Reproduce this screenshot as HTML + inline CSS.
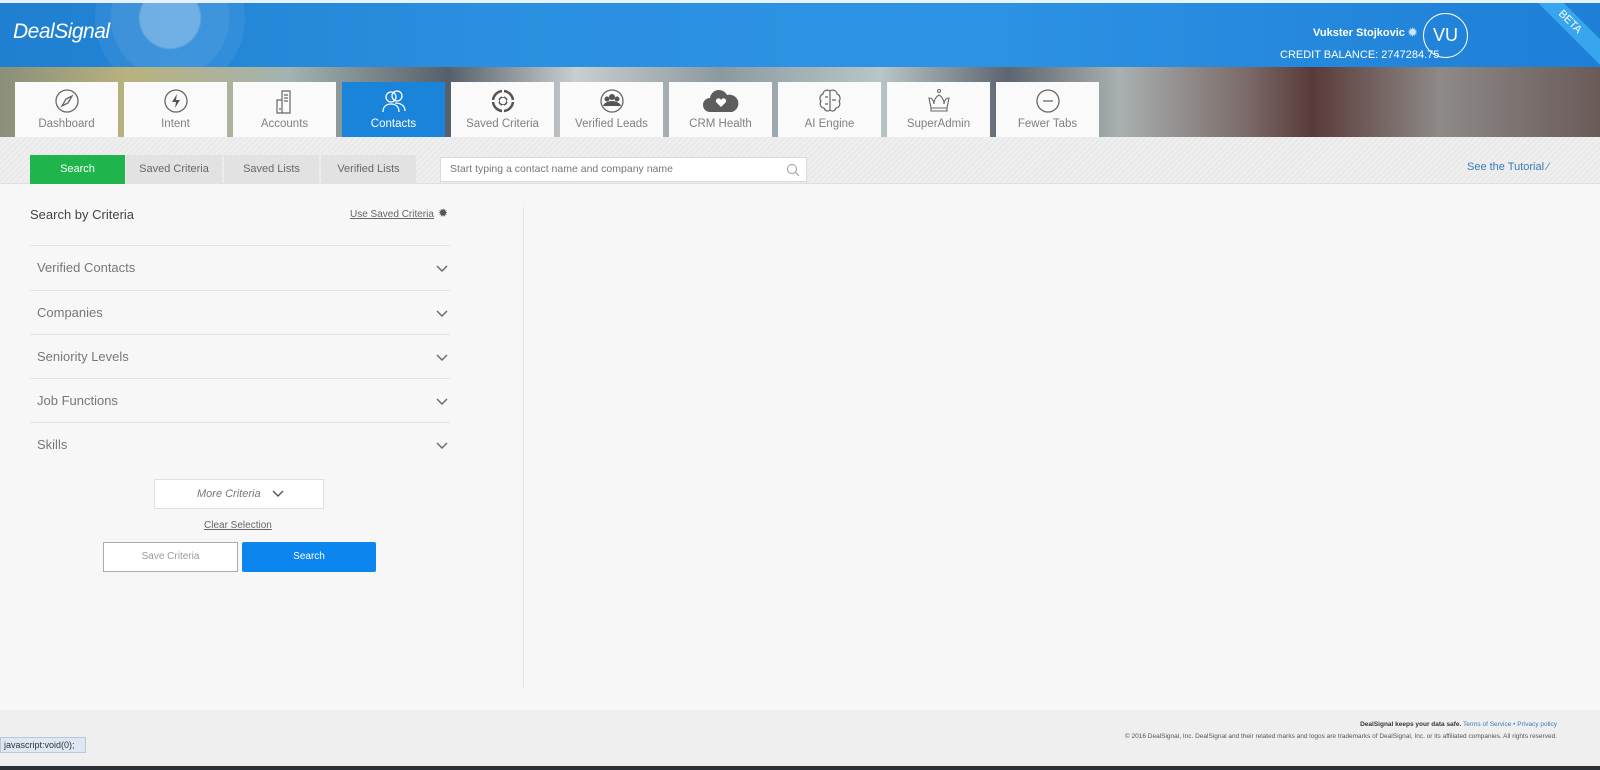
<!DOCTYPE html>
<html><head><meta charset="utf-8"><style>
*{box-sizing:border-box;margin:0;padding:0}
body{width:1600px;height:770px;overflow:hidden;background:#f7f7f7;font-family:"Liberation Sans",sans-serif;position:relative}
.abs{position:absolute}
#hdr{left:0;top:3px;width:1600px;height:64px;background:linear-gradient(90deg,#1f7fd0 0%,#2a8fe0 30%,#2d93e4 60%,#1d7fd6 100%);overflow:hidden}
#photo{left:0;top:67px;width:1600px;height:70px;background:linear-gradient(90deg,#8a8f7a 0%,#b8b27e 8%,#a4b3b0 18%,#56606a 28%,#c9ced0 36%,#8c99a0 45%,#b9c6c8 55%,#5d6570 63%,#a8b0b0 70%,#7a6a68 78%,#5a3a38 82%,#8d8a88 90%,#6a5a58 100%)}
.tab{position:absolute;top:82px;width:103px;height:55px;background:#fafafa;text-align:center;color:#808080;font-size:11.5px}
.tab .ic{display:block;margin:6px auto 0;height:26px}
.tab span{display:block;margin-top:4px}
.tab.on{background:#1a83da;color:#fff}
#sub{left:0;top:137px;width:1600px;height:47px;background:repeating-linear-gradient(135deg,#efefef 0 2px,#e9e9e9 2px 4px);border-bottom:1px solid #e0e0e0}
.st{position:absolute;top:155px;height:29px;background:#e2e2e2;color:#666;font-size:11px;text-align:center;line-height:29px}
#srch{left:440px;top:157px;width:367px;height:25px;background:#fff;border:1px solid #cfdbe6;font-size:10.5px;color:#777;line-height:23px;padding-left:9px}
.row{position:absolute;left:30px;width:420px;height:44px;border-top:1px solid #e2e2e2;color:#777;font-size:13px;line-height:44px;padding-left:7px}
.chev{position:absolute;right:2px;top:19px}
</style></head><body>
<div class="abs" style="left:0;top:0;width:1600px;height:3px;background:#e8f2fb"></div>
<div id="hdr" class="abs">
 <div class="abs" style="left:95px;top:-60px;width:150px;height:150px;border-radius:50%;background:radial-gradient(circle,rgba(255,255,255,.35) 0 28%,rgba(255,255,255,.12) 30% 55%,rgba(255,255,255,.06) 57% 100%)"></div>
 <div class="abs" style="left:13px;top:17px;color:#fff;font-size:21px;font-style:italic;letter-spacing:-0.5px">DealSignal</div>
 <div class="abs" style="left:1313px;top:23px;color:#fff;font-size:11px;font-weight:bold">Vukster Stojkovic <span style="color:#cfe4f7">✹</span></div>
 <div class="abs" style="left:1280px;top:46px;color:#fff;font-size:11px">CREDIT BALANCE: 2747284.75</div>
 <div class="abs" style="left:1423px;top:10px;width:45px;height:45px;border:1.5px solid #fff;border-radius:50%;color:#fff;font-size:18px;text-align:center;line-height:42px">VU</div>
 <div class="abs" style="left:1515px;top:10px;width:110px;height:18px;background:#38a6ee;transform:rotate(45deg);color:#fff;font-size:11px;text-align:center;line-height:18px">BETA</div>
</div>
<div id="photo" class="abs"></div>

<div class="tab" style="left:15px"><svg class="ic" width="26" height="26" viewBox="0 0 26 26"><circle cx="13" cy="13" r="11" fill="none" stroke="#666" stroke-width="1.3"/><path d="M18 8 L14 15 L8 18 L12 11Z" fill="none" stroke="#666" stroke-width="1.3"/></svg><span>Dashboard</span></div>
<div class="tab" style="left:124px"><svg class="ic" width="26" height="26" viewBox="0 0 26 26"><circle cx="13" cy="13" r="11" fill="none" stroke="#666" stroke-width="1.3"/><path d="M14 6 L9 14 H13 L12 20 L17 12 H13Z" fill="#555"/></svg><span>Intent</span></div>
<div class="tab" style="left:233px"><svg class="ic" width="26" height="26" viewBox="0 0 26 26"><path d="M10 3h8v22h-8zM5 12h5v13H5zM12 7h4M12 10h4M12 13h4M7 21h2" fill="none" stroke="#666" stroke-width="1.2"/></svg><span>Accounts</span></div>
<div class="tab on" style="left:342px"><svg class="ic" width="26" height="26" viewBox="0 0 26 26"><circle cx="10" cy="9" r="5" fill="none" stroke="#fff" stroke-width="1.3"/><circle cx="16" cy="8" r="5" fill="none" stroke="#fff" stroke-width="1.3"/><path d="M2 24c0-6 4-8 8-8s8 2 8 8M14 15c5 0 10 2 10 8" fill="none" stroke="#fff" stroke-width="1.3"/></svg><span>Contacts</span></div>
<div class="tab" style="left:451px"><svg class="ic" width="26" height="26" viewBox="0 0 26 26"><circle cx="13" cy="13" r="10" fill="none" stroke="#555" stroke-width="2.5"/><circle cx="13" cy="13" r="4" fill="none" stroke="#555" stroke-width="1.5"/><path d="M13 1v8M13 17v8M1 13h8M17 13h8" stroke="#fafafa" stroke-width="2"/></svg><span>Saved Criteria</span></div>
<div class="tab" style="left:560px"><svg class="ic" width="26" height="26" viewBox="0 0 26 26"><circle cx="13" cy="13" r="11" fill="none" stroke="#666" stroke-width="1.3"/><circle cx="8" cy="11" r="2.5" fill="#555"/><circle cx="13" cy="9" r="3" fill="#555"/><circle cx="18" cy="11" r="2.5" fill="#555"/><path d="M4 18c1-4 7-5 9-5s8 1 9 5z" fill="#555"/></svg><span>Verified Leads</span></div>
<div class="tab" style="left:669px"><svg class="ic" width="38" height="26" viewBox="0 0 38 26"><path d="M8 24a7 7 0 0 1 0-14 9 9 0 0 1 17-3 8 8 0 0 1 5 17z" fill="#5d5d5d"/><path d="M19 19l-5-5a2.5 2.5 0 0 1 5-2 2.5 2.5 0 0 1 5 2z" fill="#fff"/></svg><span>CRM Health</span></div>
<div class="tab" style="left:778px"><svg class="ic" width="26" height="26" viewBox="0 0 26 26"><path d="M13 3c-3-2-7 0-7 3-3 1-4 5-2 7-2 3 0 7 3 7 1 3 4 4 6 2 2 2 5 1 6-2 3 0 5-4 3-7 2-2 1-6-2-7 0-3-4-5-7-3zM13 3v19M8 9h3M15 12h4M8 16h3" fill="none" stroke="#666" stroke-width="1.2"/></svg><span>AI Engine</span></div>
<div class="tab" style="left:887px"><svg class="ic" width="26" height="26" viewBox="0 0 26 26"><circle cx="13" cy="3" r="1.5" fill="none" stroke="#666"/><path d="M3 10c3 0 5 3 5 6 0-5 3-8 5-9 2 1 5 4 5 9 0-3 2-6 5-6l-2 10H5z M5 20h16v3H5z" fill="none" stroke="#666" stroke-width="1.1"/></svg><span>SuperAdmin</span></div>
<div class="tab" style="left:996px"><svg class="ic" width="26" height="26" viewBox="0 0 26 26"><circle cx="13" cy="13" r="11" fill="none" stroke="#666" stroke-width="1.3"/><path d="M8 13h10" stroke="#666" stroke-width="1.3"/></svg><span>Fewer Tabs</span></div>

<div id="sub" class="abs"></div>
<div class="st" style="left:30px;width:95px;background:#1fb54c;color:#fff">Search</div>
<div class="st" style="left:126px;width:96px">Saved Criteria</div>
<div class="st" style="left:224px;width:95px">Saved Lists</div>
<div class="st" style="left:321px;width:95px">Verified Lists</div>
<div id="srch" class="abs">Start typing a contact name and company name
 <svg class="abs" style="right:6px;top:5px" width="14" height="14" viewBox="0 0 14 14"><circle cx="6" cy="6" r="4.5" fill="none" stroke="#999"/><path d="M9.5 9.5 13 13" stroke="#999"/></svg></div>
<div class="abs" style="left:1467px;top:161px;font-size:11px;color:#3a7ab8">See the Tutorial ⁄</div>

<div class="abs" style="left:30px;top:207px;font-size:13px;color:#444">Search by Criteria</div>
<div class="abs" style="left:350px;top:209px;font-size:10px;color:#666;text-decoration:underline">Use Saved Criteria</div>
<div class="abs" style="left:438px;top:206px;font-size:12px;color:#555">✹</div>
<div class="row" style="top:245px">Verified Contacts<svg class="chev" width="12" height="8" viewBox="0 0 12 8"><path d="M1 1l5 5 5-5" fill="none" stroke="#666" stroke-width="1.4"/></svg></div>
<div class="row" style="top:290px">Companies<svg class="chev" width="12" height="8" viewBox="0 0 12 8"><path d="M1 1l5 5 5-5" fill="none" stroke="#666" stroke-width="1.4"/></svg></div>
<div class="row" style="top:334px">Seniority Levels<svg class="chev" width="12" height="8" viewBox="0 0 12 8"><path d="M1 1l5 5 5-5" fill="none" stroke="#666" stroke-width="1.4"/></svg></div>
<div class="row" style="top:378px">Job Functions<svg class="chev" width="12" height="8" viewBox="0 0 12 8"><path d="M1 1l5 5 5-5" fill="none" stroke="#666" stroke-width="1.4"/></svg></div>
<div class="row" style="top:422px">Skills<svg class="chev" width="12" height="8" viewBox="0 0 12 8"><path d="M1 1l5 5 5-5" fill="none" stroke="#666" stroke-width="1.4"/></svg></div>

<div class="abs" style="left:154px;top:479px;width:170px;height:30px;background:#fff;border:1px solid #e0e0e0;font-size:11px;font-style:italic;color:#777;line-height:28px;padding-left:42px">More Criteria <svg style="margin-left:8px;vertical-align:middle" width="12" height="8" viewBox="0 0 12 8"><path d="M1 1l5 5 5-5" fill="none" stroke="#555" stroke-width="1.4"/></svg></div>
<div class="abs" style="left:204px;top:520px;font-size:10px;color:#666;text-decoration:underline">Clear Selection</div>
<div class="abs" style="left:103px;top:542px;width:135px;height:30px;background:#fff;border:1px solid #aaa;font-size:10px;color:#999;text-align:center;line-height:28px">Save Criteria</div>
<div class="abs" style="left:242px;top:542px;width:134px;height:30px;background:#0c85ee;border-radius:2px;font-size:10px;color:#fff;text-align:center;line-height:30px">Search</div>

<div class="abs" style="left:523px;top:207px;width:1px;height:481px;background:#e4e4e4"></div>

<div class="abs" style="left:0;top:710px;width:1600px;height:56px;background:#efefef"></div>
<div class="abs" style="right:43px;top:721px;font-size:6.5px;color:#333"><b>DealSignal keeps your data safe.</b> <span style="color:#3a7ab8">Terms of Service • Privacy policy</span></div>
<div class="abs" style="right:43px;top:733px;font-size:6.5px;color:#555">© 2016 DealSignal, Inc. DealSignal and their related marks and logos are trademarks of DealSignal, Inc. or its affiliated companies. All rights reserved.</div>
<div class="abs" style="left:0;top:737px;width:86px;height:16px;background:#dee8f3;border:1px solid #b8c8dc;font-size:9px;color:#333;line-height:14px;padding-left:3px">javascript:void(0);</div>
<div class="abs" style="left:0;top:766px;width:1600px;height:4px;background:#2b2f36"></div>
</body></html>
